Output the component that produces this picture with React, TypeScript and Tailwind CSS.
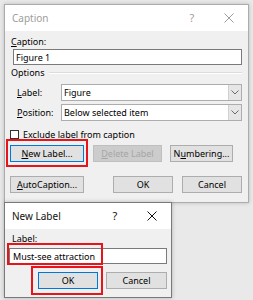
import React from 'react';

// Small chevron used by the combo boxes
function Chevron() {
  return (
    <svg width="8" height="5" viewBox="0 0 8 5" fill="none">
      <polyline points="0.5,0.5 4,4 7.5,0.5" stroke="#6b6b6b" strokeWidth="1" />
    </svg>
  );
}

function TitleBar({ title, active }: { title: string; active: boolean }) {
  const color = active ? 'text-[#111]' : 'text-[#9d9d9d]';
  return (
    <div className={`h-[26px] bg-white flex items-center pl-[7px] ${color}`}>
      <span className="flex-1 text-[10px]">{title}</span>
      <span className="w-[36px] text-center text-[11px]">?</span>
      <span className="w-[38px] flex justify-center">
        <svg width="10" height="10" viewBox="0 0 10 10">
          <path d="M0.5 0.5 L9.5 9.5 M9.5 0.5 L0.5 9.5" stroke="currentColor" strokeWidth="1" />
        </svg>
      </span>
    </div>
  );
}

function Button({
  children,
  width,
  focused,
  disabled,
}: {
  children: React.ReactNode;
  width: string;
  focused?: boolean;
  disabled?: boolean;
}) {
  let cls = 'bg-[#e1e1e1] border-[#adadad] text-black';
  if (focused) cls = 'bg-[#e1e1e1] border-[#0078d7] text-black';
  if (disabled) cls = 'bg-[#cccccc] border-[#bfbfbf] text-[#a6a6a6]';
  return (
    <div className={`${width} h-[17px] border flex items-center justify-center leading-none ${cls}`}>
      {children}
    </div>
  );
}

function Combo({ value }: { value: string }) {
  return (
    <div className="flex-1 h-[17px] border border-[#adadad] bg-white flex">
      <span className="flex-1 pl-[2px] flex items-center leading-none">{value}</span>
      <span className="w-[13px] bg-[#e6e6e6] border-l border-[#d0d0d0] flex items-center justify-center">
        <Chevron />
      </span>
    </div>
  );
}

function RedBox({ className }: { className: string }) {
  return <span className={`absolute border-2 border-[#e8141b] pointer-events-none ${className}`} />;
}

export default function App() {
  return (
    <div className="w-[253px] h-[300px] bg-[#e9e9e9] pt-[4px] pl-[4px] font-['Noto_Sans',sans-serif] text-[9px] text-black overflow-hidden">
      {/* Caption dialog */}
      <div className="w-[245px] h-[199px] border border-[#acacac] bg-[#f0f0f0] shadow-[0_0_4px_rgba(0,0,0,0.2)]">
        <TitleBar title="Caption" active={false} />
        <div className="px-[5px] pt-[5px]">
          <div className="h-[12px] leading-[12px] ml-[1px]">
            <span className="underline">C</span>aption:
          </div>
          <div className="mt-[1px] ml-[3px] mr-[1px] h-[16px] border border-[#7a7a7a] bg-white flex items-center pl-[2px] leading-none">
            Figure 1
          </div>
          <div className="mt-[2px] h-[12px] flex items-center ml-[1px]">
            <span>Options</span>
            <span className="flex-1 ml-[5px] mr-[1px] h-[2px] border-t border-[#dcdcdc] border-b border-b-white" />
          </div>
          <div className="mt-[5px] flex items-center mr-[1px]">
            <span className="w-[51px] pl-[7px]">
              <span className="underline">L</span>abel:
            </span>
            <Combo value="Figure" />
          </div>
          <div className="mt-[3px] flex items-center mr-[1px]">
            <span className="w-[51px] pl-[7px]">
              <span className="underline">P</span>osition:
            </span>
            <Combo value="Below selected item" />
          </div>
          <div className="mt-[9px] flex items-center h-[9px]">
            <span className="w-[9px] h-[9px] border border-[#333] bg-white" />
            <span className="ml-[4px]">
              E<span className="underline">x</span>clude label from caption
            </span>
          </div>
          <div className="mt-[6px] flex">
            <div className="relative">
              <Button width="w-[74px]" focused>
                <span className="underline">N</span>ew Label...
              </Button>
              <RedBox className="-left-[4px] -right-[4px] -top-[6px] -bottom-[5px]" />
            </div>
            <div className="ml-[9px]">
              <Button width="w-[69px]" disabled>
                <span className="underline">D</span>elete Label
              </Button>
            </div>
            <div className="ml-[8px]">
              <Button width="w-[63px]">
                N<span className="underline">u</span>mbering...
              </Button>
            </div>
          </div>
          <div className="mt-[14px] flex">
            <Button width="w-[74px]">
              <span className="underline">A</span>utoCaption...
            </Button>
            <div className="ml-[29px]">
              <Button width="w-[60px]">OK</Button>
            </div>
            <div className="ml-[9px]">
              <Button width="w-[60px]">Cancel</Button>
            </div>
          </div>
        </div>
      </div>

      {/* New Label dialog */}
      <div className="relative -mt-[1px] w-[168px] h-[96px] border border-[#7a7a7a] bg-[#f0f0f0] shadow-[0_0_4px_rgba(0,0,0,0.25)]">
        <TitleBar title="New Label" active />
        <div className="pl-[4px] pr-[4px] pt-[4px]">
          <div className="h-[12px] leading-[12px] ml-[3px]">Label:</div>
          <div className="relative mt-[3px] h-[16px] border border-[#7a7a7a] bg-white flex items-center pl-[3px] leading-none">
            Must-see attraction
            <RedBox className="-left-[3px] -top-[6px] w-[96px] h-[22px]" />
          </div>
          <div className="mt-[8px] flex justify-end">
            <div className="relative">
              <Button width="w-[60px]" focused>OK</Button>
              <RedBox className="-left-[7px] -right-[5px] -top-[6px] -bottom-[6px]" />
            </div>
            <div className="ml-[8px]">
              <Button width="w-[61px]">Cancel</Button>
            </div>
          </div>
        </div>
      </div>
    </div>
  );
}
